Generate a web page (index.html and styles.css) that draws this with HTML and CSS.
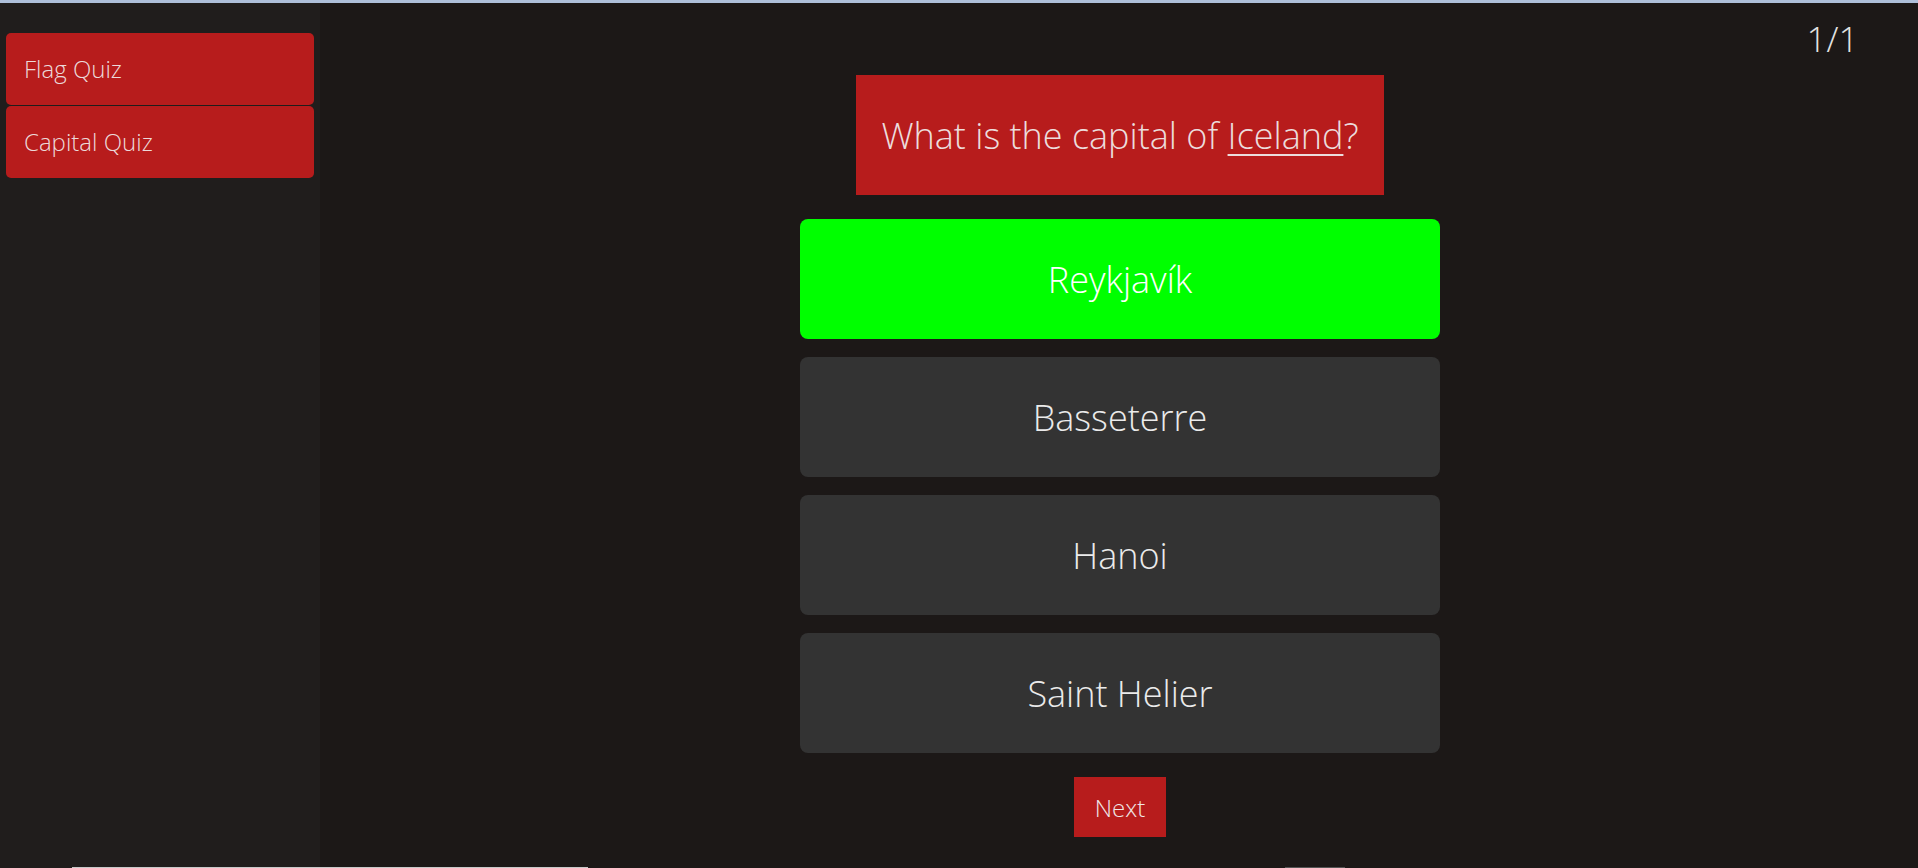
FILE: index.html
```html
<!DOCTYPE html>
<html lang="en">
<head>
<meta charset="utf-8">
<title>Quiz</title>
<link rel="stylesheet" href="styles.css">
</head>
<body>
<div class="app">
  <aside class="sidebar">
    <a class="nav-btn">Flag Quiz</a>
    <a class="nav-btn">Capital Quiz</a>
  </aside>
  <main class="main">
    <div class="question">What is the capital of&nbsp;<u>Iceland</u>?</div>
    <div class="options">
      <button class="option correct">Reykjavík</button>
      <button class="option">Basseterre</button>
      <button class="option">Hanoi</button>
      <button class="option">Saint Helier</button>
    </div>
    <button class="next">Next</button>
    <div class="counter">1/1</div>
  </main>
</div>
<div class="scroll-thumb"></div>
<div class="scroll-thumb2"></div>
</body>
</html>
```

FILE: styles.css
```css
html, body {
  margin: 0;
  padding: 0;
  height: 100%;
  overflow: hidden;
}
body {
  background: #1c1817;
  border-top: 3px solid #aebfd9;
  box-sizing: border-box;
  font-family: "Open Sans", "Noto Sans", sans-serif;
  font-weight: 300;
  position: relative;
}
.app {
  display: grid;
  grid-template-columns: 320px 1fr;
  height: 865px;
}
.sidebar {
  background: #201d1c;
  padding: 30px 6px;
  display: flex;
  flex-direction: column;
  gap: 1px;
}
.nav-btn {
  height: 72px;
  box-sizing: border-box;
  background: #b71c1c;
  border-radius: 5px;
  color: #ecd9d9;
  font-size: 24px;
  padding-left: 18px;
  padding-bottom: 2px;
  display: flex;
  align-items: center;
}
.main {
  position: relative;
  display: flex;
  flex-direction: column;
  align-items: center;
  padding-top: 72px;
  padding-left: 2px;
}
.question {
  height: 120px;
  padding: 0 25px;
  background: #b71c1c;
  color: #ecdcdc;
  font-size: 36px;
  display: flex;
  align-items: center;
  justify-content: center;
  white-space: nowrap;
}
.question u {
  text-decoration-thickness: 2px;
  text-underline-offset: 5px;
}
.options {
  margin-top: 24px;
  width: 640px;
  display: flex;
  flex-direction: column;
  gap: 18px;
}
.option {
  height: 120px;
  border: none;
  border-radius: 8px;
  background: #333333;
  color: #ebebeb;
  font-family: inherit;
  font-weight: 300;
  font-size: 36px;
  padding: 0;
}
.option.correct {
  background: #00ff00;
  color: #ffffff;
}
.next {
  margin-top: 24px;
  height: 60px;
  padding: 0 21px;
  border: none;
  background: #b71c1c;
  color: #f0e6e6;
  font-family: inherit;
  font-weight: 300;
  font-size: 24px;
}
.counter {
  position: absolute;
  top: 18px;
  right: 0;
  width: 171px;
  color: #e2e2e2;
  font-size: 35px;
  line-height: 1;
  text-align: center;
}
.scroll-thumb {
  position: absolute;
  left: 72px;
  bottom: 0;
  width: 516px;
  height: 1px;
  background: #c8c8c8;
}
.scroll-thumb2 {
  position: absolute;
  left: 1285px;
  bottom: 0;
  width: 60px;
  height: 1px;
  background: #555;
}
```
